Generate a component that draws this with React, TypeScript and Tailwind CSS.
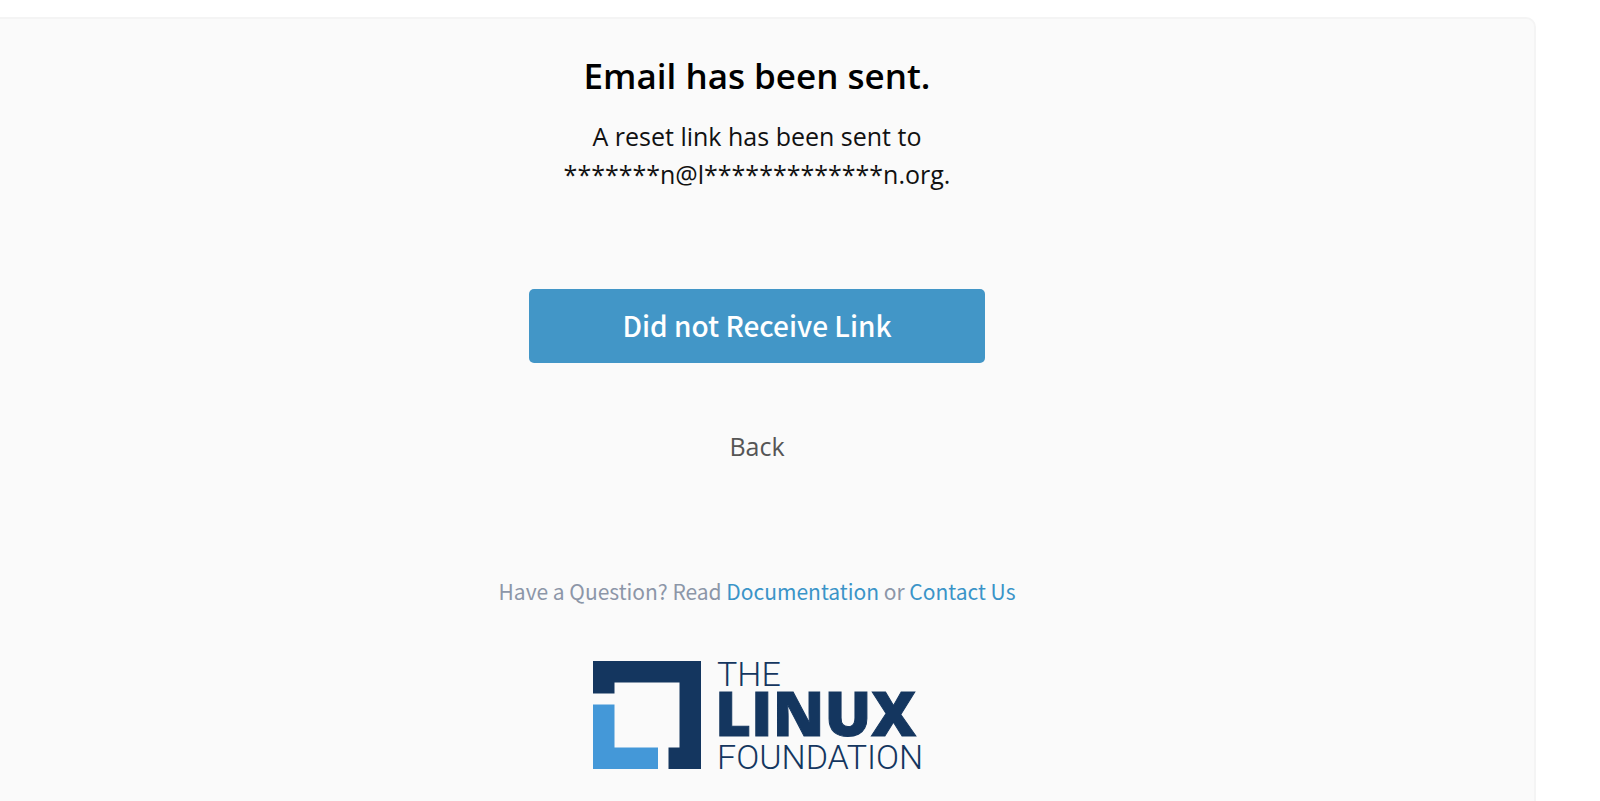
import React from 'react';

// Dark frame with the light corner piece, name set on three lines
function LinuxFoundationLogo() {
  return (
    <svg
      role="img"
      aria-label="The Linux Foundation"
      viewBox="0 0 328 110"
      className="h-[110px] w-[328px] overflow-visible"
    >
      <path d="M0 0H108V108H75.5V86.5H86.5V21.5H21.5V32.5H0Z" fill="#14365f" />
      <path d="M0 43.5H21.5V86.5H65V108H0Z" fill="#4498d8" />
      <g fill="#14365f">
        <text x="124" y="25" fontSize="34" fontWeight="300" fontFamily="Roboto, sans-serif">THE</text>
        <text x="122" y="75" fontSize="62" fontWeight="800" fontFamily="Open Sans, sans-serif" stroke="#14365f" strokeWidth="1">LINUX</text>
        <text x="124" y="108" fontSize="34" fontWeight="300" fontFamily="Roboto, sans-serif">FOUNDATION</text>
      </g>
    </svg>
  );
}

export default function App() {
  const email = '*******n@l*************n.org';

  return (
    <div className="min-h-screen bg-white pt-[17px] pr-16 font-['Open_Sans',sans-serif]">
      <main className="flex min-h-[calc(100vh-17px)] flex-col items-center rounded-tr-[10px] border-t-2 border-r-2 border-[#f4f4f4] bg-[#fafafa] pt-8 pr-5 text-center">
        <h1 className="text-[35px] leading-[50px] font-semibold text-black">Email has been sent.</h1>
        <p className="mt-4 text-[25px] leading-[38px] text-[#111111]">
          A reset link has been sent to
          <br />
          {email}.
        </p>

        <button
          type="button"
          className="mt-24 h-[74px] w-full max-w-[456px] rounded-[5px] bg-[#4296c7] pb-0.5 font-['Noto_Sans_CJK_SC',sans-serif] text-[28px] leading-[40px] font-medium text-white"
        >
          Did not Receive Link
        </button>
        <a href="#back" className="mt-16 text-[25px] leading-[38px] text-[#555555]">
          Back
        </a>

        <p className="mt-27 font-['Noto_Sans_CJK_SC',sans-serif] text-[21px] leading-[36px] text-[#8c96a8]">
          Have a Question? Read{' '}
          <a href="#documentation" className="text-[#3a94c8]">Documentation</a> or{' '}
          <a href="#contact" className="text-[#3a94c8]">Contact Us</a>
        </p>
        <div className="mt-13">
          <LinuxFoundationLogo />
        </div>
      </main>
    </div>
  );
}
